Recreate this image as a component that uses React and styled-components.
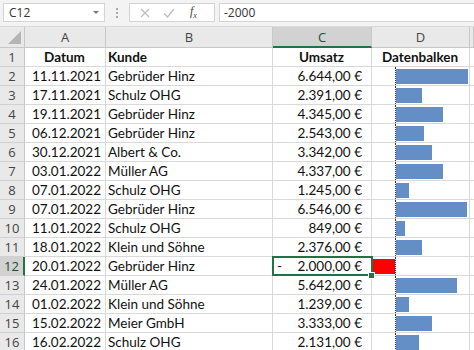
import React from 'react';
import styled, { createGlobalStyle } from 'styled-components';

const GlobalStyle = createGlobalStyle`
  html, body {
    margin: 0;
    padding: 0;
    background: #ffffff;
    overflow: hidden;
  }
  body {
    font-family: Lato, "Open Sans", sans-serif;
  }
`;

const GREEN = '#217346';
const GRID = '#d9d9d9';
const BAR = '#638ec6';
const MAX = 6644;
const BAR_MAX = 72;

const rows = [
  ['11.11.2021', 'Gebrüder Hinz', 6644],
  ['17.11.2021', 'Schulz OHG', 2391],
  ['19.11.2021', 'Gebrüder Hinz', 4345],
  ['06.12.2021', 'Gebrüder Hinz', 2543],
  ['30.12.2021', 'Albert & Co.', 3342],
  ['03.01.2022', 'Müller AG', 4337],
  ['07.01.2022', 'Schulz OHG', 1245],
  ['07.01.2022', 'Gebrüder Hinz', 6546],
  ['11.01.2022', 'Schulz OHG', 849],
  ['18.01.2022', 'Klein und Söhne', 2376],
  ['20.01.2022', 'Gebrüder Hinz', -2000],
  ['24.01.2022', 'Müller AG', 5642],
  ['01.02.2022', 'Klein und Söhne', 1239],
  ['15.02.2022', 'Meier GmbH', 3333],
  ['16.02.2022', 'Schulz OHG', 2131],
];

const money = (v) =>
  Math.abs(v)
    .toFixed(2)
    .replace('.', ',')
    .replace(/\B(?=(\d{3})+(?!\d))/g, '.') + ' €';

const Page = styled.div`
  width: 474px;
  height: 350px;
  overflow: hidden;
  background: #ffffff;
`;

const FormulaBar = styled.div`
  display: flex;
  align-items: flex-start;
  height: 27px;
  padding: 3px 0 0 3px;
  box-sizing: border-box;
  background: #f3f3f3;
  border-bottom: 1px solid #dadada;
  font-family: "Open Sans", Lato, sans-serif;
  font-size: 12px;
  color: #333;
`;

const NameBox = styled.div`
  display: flex;
  align-items: center;
  justify-content: space-between;
  width: 102px;
  height: 19px;
  box-sizing: border-box;
  padding: 0 5px 0 5px;
  background: #fff;
  border: 1px solid #d4d4d4;
`;

const Caret = styled.span`
  width: 0;
  height: 0;
  border-left: 3px solid transparent;
  border-right: 3px solid transparent;
  border-top: 3px solid #777;
`;

const Grip = styled.div`
  width: 24px;
  height: 19px;
  display: flex;
  flex-direction: column;
  align-items: center;
  justify-content: center;
  gap: 2px;
  & span {
    width: 2px;
    height: 2px;
    background: #aaa;
  }
`;

const FxBox = styled.div`
  display: flex;
  align-items: center;
  width: 86px;
  height: 19px;
  box-sizing: border-box;
  padding: 0 0 0 10px;
  gap: 13px;
  background: #fff;
  border: 1px solid #d4d4d4;
`;

const Fx = styled.span`
  font-family: "Liberation Serif", serif;
  font-style: italic;
  font-size: 12px;
  color: #444;
  margin-left: 2px;
`;

const Input = styled.div`
  flex: 1;
  height: 19px;
  margin-left: 4px;
  box-sizing: border-box;
  padding: 0 4px;
  display: flex;
  align-items: center;
  background: #fff;
  border: 1px solid #d4d4d4;
  border-right: none;
`;

const Grid = styled.div`
  display: grid;
  grid-template-columns: 25px 81px 167px 99px 98px 1fr;
  grid-auto-rows: 19px;
  grid-template-rows: 21px;
  font-size: 13.5px;
  color: #111;
`;

const Corner = styled.div`
  background: #e9e9e9;
  border-right: 1px solid #c8c8c8;
  border-bottom: 1px solid #c8c8c8;
  display: flex;
  align-items: flex-end;
  justify-content: flex-end;
  padding: 0 3px 3px 0;
  & span {
    width: 0;
    height: 0;
    border-left: 13px solid transparent;
    border-bottom: 13px solid #b5b5b5;
  }
`;

const ColHead = styled.div`
  display: flex;
  align-items: center;
  justify-content: center;
  font-family: "Open Sans", Lato, sans-serif;
  font-size: 13px;
  color: ${(p) => (p.$active ? '#1e4e33' : '#444')};
  background: ${(p) => (p.$active ? '#d2d2d2' : '#e9e9e9')};
  border-right: 1px solid #c8c8c8;
  border-bottom: ${(p) => (p.$active ? `2px solid ${GREEN}` : '1px solid #c8c8c8')};
  box-sizing: border-box;
`;

const RowHead = styled.div`
  display: flex;
  align-items: center;
  justify-content: center;
  font-family: "Open Sans", Lato, sans-serif;
  font-size: 13px;
  color: ${(p) => (p.$active ? '#1e4e33' : '#444')};
  background: ${(p) => (p.$active ? '#d2d2d2' : '#e9e9e9')};
  border-bottom: 1px solid #d0d0d0;
  border-right: ${(p) => (p.$active ? `2px solid ${GREEN}` : '1px solid #c8c8c8')};
  box-sizing: border-box;
`;

const Cell = styled.div`
  display: flex;
  align-items: center;
  justify-content: ${(p) => p.$align || 'flex-start'};
  padding: 0 ${(p) => p.$pr || 3}px 0 2px;
  font-weight: ${(p) => (p.$bold ? 700 : 400)};
  white-space: nowrap;
  overflow: visible;
  border-right: 1px solid ${GRID};
  border-bottom: 1px solid ${GRID};
  box-sizing: border-box;
  position: relative;
`;

const Selected = styled(Cell)`
  justify-content: space-between;
  padding-left: 4px;
  &::after {
    content: '';
    position: absolute;
    left: -1px;
    top: -1px;
    right: -2px;
    bottom: -1px;
    border: 2px solid ${GREEN};
    pointer-events: none;
  }
  &::before {
    content: '';
    position: absolute;
    right: -4px;
    bottom: -4px;
    width: 5px;
    height: 5px;
    background: ${GREEN};
    border: 1px solid #fff;
    z-index: 2;
  }
`;

const BarCell = styled.div`
  display: grid;
  grid-template-columns: 23px 1fr;
  border-right: 1px solid ${GRID};
  border-bottom: 1px solid ${GRID};
  box-sizing: border-box;
`;

const NegSide = styled.div`
  display: flex;
  justify-content: flex-end;
  padding: 2px 0 1px;
`;

const PosSide = styled.div`
  display: flex;
  padding: 2px 0 1px;
  border-left: 1px dotted #1f2f5f;
`;

const Bar = styled.div`
  height: 100%;
  background: ${(p) => (p.$neg ? '#ff0000' : BAR)};
`;

const Filler = styled.div`
  border-bottom: 1px solid ${GRID};
`;

export default function App() {
  return (
    <Page>
      <GlobalStyle />
      <FormulaBar>
        <NameBox>
          C12
          <Caret />
        </NameBox>
        <Grip>
          <span />
          <span />
          <span />
        </Grip>
        <FxBox>
          <svg width="10" height="10" viewBox="0 0 10 10">
            <path d="M1 1 L9 9 M9 1 L1 9" stroke="#bdbdbd" strokeWidth="1.2" fill="none" />
          </svg>
          <svg width="12" height="10" viewBox="0 0 12 10">
            <path d="M1 5.5 L4.5 9 L11 1" stroke="#bdbdbd" strokeWidth="1.2" fill="none" />
          </svg>
          <Fx>
            f<sub style={{ fontSize: 8 }}>x</sub>
          </Fx>
        </FxBox>
        <Input>-2000</Input>
      </FormulaBar>
      <Grid>
        <Corner>
          <span />
        </Corner>
        <ColHead>A</ColHead>
        <ColHead>B</ColHead>
        <ColHead $active>C</ColHead>
        <ColHead>D</ColHead>
        <ColHead />

        <RowHead>1</RowHead>
        <Cell $bold $align="center">Datum</Cell>
        <Cell $bold>Kunde</Cell>
        <Cell $bold $align="center">Umsatz</Cell>
        <Cell $bold $align="center">Datenbalken</Cell>
        <Filler />

        {rows.map(([date, client, value], i) => {
          const n = i + 2;
          const w = (Math.abs(value) / MAX) * BAR_MAX;
          const neg = value < 0;
          return (
            <React.Fragment key={n}>
              <RowHead $active={n === 12}>{n}</RowHead>
              <Cell $align="flex-end" $pr={4}>{date}</Cell>
              <Cell>{client}</Cell>
              {neg ? (
                <Selected $pr={9}>
                  <span>-</span>
                  <span>{money(value)}</span>
                </Selected>
              ) : (
                <Cell $align="flex-end" $pr={9}>{money(value)}</Cell>
              )}
              <BarCell>
                <NegSide>{neg && <Bar $neg style={{ width: w }} />}</NegSide>
                <PosSide>{!neg && <Bar style={{ width: w }} />}</PosSide>
              </BarCell>
              <Filler />
            </React.Fragment>
          );
        })}
      </Grid>
    </Page>
  );
}
